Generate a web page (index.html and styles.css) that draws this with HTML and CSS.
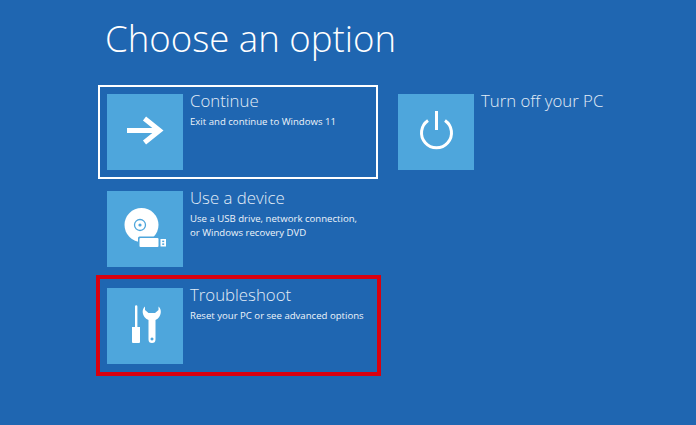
FILE: index.html
```html
<!DOCTYPE html>
<html lang="en">
    <head>
        <meta charset="UTF-8" />
        <title>Choose an option</title>
        <link rel="stylesheet" href="styles.css">
    </head>
    <body>
        <h1 class="title">Choose an option</h1>
        <div class="options">
            <div class="column">
                <div class="option focused">
                    <div class="tile">
                        <svg viewBox="0 0 76 76">
                            <path d="M20 36.500H51" class="line thick" />
                            <path d="M37.500 24.500L52.500 36.500L37.500 48.500" class="line thick" />
                        </svg>
                    </div>
                    <div class="text">
                        <h3>Continue</h3>
                        <p>Exit and continue to Windows 11</p>
                    </div>
                </div>
                <div class="option">
                    <div class="tile">
                        <svg viewBox="0 0 76 76">
                            <circle cx="34.500" cy="34" r="17" class="solid" />
                            <circle cx="33" cy="34" r="5.500" class="ring" />
                            <circle cx="33" cy="34" r="1.600" class="hole" />
                            <rect x="31" y="45.500" width="22" height="12" rx="1.500" class="hole" />
                            <rect x="32.500" y="47" width="19" height="9" rx="1" class="solid" />
                            <rect x="53.500" y="48" width="5.500" height="7.500" class="solid" />
                            <rect x="55.200" y="49.600" width="2" height="1.500" class="hole" />
                            <rect x="55.200" y="52.400" width="2" height="1.500" class="hole" />
                        </svg>
                    </div>
                    <div class="text">
                        <h3>Use a device</h3>
                        <p>Use a USB drive, network connection,<br />or Windows recovery DVD</p>
                    </div>
                </div>
                <div class="option marked">
                    <div class="tile">
                        <svg viewBox="0 0 76 76">
                            <path d="M28 18.500a1.200 1.200 0 0 1 2.400 0V39H33V54a1 1 0 0 1-1 1H26a1 1 0 0 1-1-1V39H28Z" class="solid" />
                            <path d="M38 18.500C34.500 21 34.500 29 41.500 32V51.500a3.500 3.500 0 0 0 7 0V32C55 29 55 21 51.500 18.500V22L48 25H41.500L38 22ZM45 49.500a1.500 1.500 0 1 0 .01 0Z" class="solid" fill-rule="evenodd" />
                        </svg>
                    </div>
                    <div class="text">
                        <h3>Troubleshoot</h3>
                        <p>Reset your PC or see advanced options</p>
                    </div>
                </div>
            </div>
            <div class="column">
                <div class="option">
                    <div class="tile">
                        <svg viewBox="0 0 76 76">
                            <path d="M30 26.500A15 15 0 1 0 47 26.500" class="line" />
                            <path d="M38.500 17V36" class="line" />
                        </svg>
                    </div>
                    <div class="text">
                        <h3>Turn off your PC</h3>
                    </div>
                </div>
            </div>
        </div>
    </body>
</html>
```

FILE: styles.css
```css
body {
    margin: 0;
    height: 425px;
    overflow: hidden;
    background: #1f66b1;
    color: #fff;
    font-family: "Open Sans", "Liberation Sans", sans-serif;
}
h1,
h3,
p {
    margin: 0;
}
.title {
    padding: 12px 0 0 105px;
    font-size: 36.6px;
    line-height: 52px;
    font-weight: 300;
}
.options {
    display: flex;
    gap: 15px;
    margin-top: 23px;
    padding-left: 100px;
}
.column {
    display: flex;
    flex-direction: column;
    gap: 7px;
}
.option {
    position: relative;
    display: flex;
    gap: 7px;
    width: 276px;
    box-sizing: border-box;
    padding: 7px;
}
.option.focused {
    outline: 2px solid #fff;
}
/* red marker drawn on top of the screenshot */
.option.marked::after {
    content: "";
    position: absolute;
    top: -6px;
    left: -4px;
    right: -5px;
    bottom: -5px;
    border: 4px solid #d9000f;
}
.tile {
    flex: none;
    width: 76px;
    height: 76px;
    background: #4ea6dc;
}
.tile svg {
    display: block;
    width: 100%;
    height: 100%;
}
.solid {
    fill: #fff;
}
.hole {
    fill: #4ea6dc;
}
.ring {
    fill: none;
    stroke: #4ea6dc;
    stroke-width: 1.3;
}
.line {
    fill: none;
    stroke: #fff;
    stroke-width: 3;
}
.line.thick {
    stroke-width: 5;
}
.text {
    flex: 1;
}
.text h3 {
    margin-top: -4px;
    font-size: 16.8px;
    line-height: 22px;
    font-weight: 300;
    color: #e3edf7;
}
.text p {
    margin-top: 3px;
    font-size: 9.6px;
    line-height: 14px;
    color: #eef4fa;
    white-space: nowrap;
}
```
